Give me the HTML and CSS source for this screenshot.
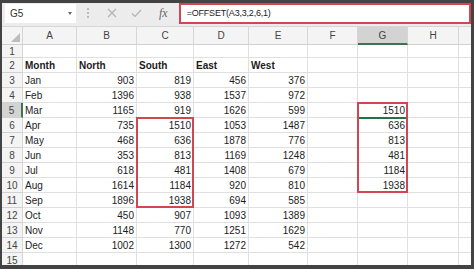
FILE: index.html
```html
<!DOCTYPE html>
<html lang="en">
<head>
  <meta charset="UTF-8" />
  <meta name="viewport" content="width=device-width, initial-scale=1.0"/>
  <title>OFFSET example - Sheet1</title>
  <link rel="stylesheet" href="styles.css">
</head>
<body>
  <div class="window">
    <div class="formula-bar">
      <div class="name-box">
        <span>G5</span>
        <span class="caret"></span>
      </div>
      <div class="grip"><i></i><i></i><i></i></div>
      <svg class="bar-icon cancel" width="10" height="10" viewBox="0 0 10 10" aria-label="Cancel">
        <path d="M1 1 L9 9 M9 1 L1 9" />
      </svg>
      <svg class="bar-icon enter" width="11" height="9" viewBox="0 0 11 9" aria-label="Enter">
        <path d="M1 4.5 L4 7.5 L10 1" />
      </svg>
      <span class="fx">fx</span>
      <div class="formula">=OFFSET(A3,3,2,6,1)</div>
    </div>

    <div class="sheet" id="sheet">
      <!-- cells are added by app.js -->
      <div class="selected"></div>
      <div class="outline source"></div>
      <div class="outline result"></div>
    </div>
  </div>

  <script src="app.js"></script>
</body>
</html>
```

FILE: styles.css
```css
/* Basic reset */
* {
  margin: 0;
  padding: 0;
  box-sizing: border-box;
}

body {
  width: 474px;
  height: 269px;
  overflow: hidden;
  padding: 3px 3px 0 2px;
  background-color: #434343;
  font-family: "Liberation Sans", Arial, sans-serif;
  color: #1c1c1c;
}

.window {
  height: 262px;
  background-color: #fff;
  overflow: hidden;
}

/* Formula bar */
.formula-bar {
  height: 24px;
  display: flex;
  align-items: center;
  padding-bottom: 3px;
  background-color: #ececec;
  border-bottom: 1px solid #d6d6d6;
}

.name-box {
  width: 71px;
  height: 19px;
  margin-left: 3px;
  display: flex;
  align-items: center;
  justify-content: space-between;
  padding: 0 4px 0 5px;
  background-color: #fff;
  font-size: 10px;
  color: #333;
}

.caret {
  width: 0;
  height: 0;
  border-left: 2.5px solid transparent;
  border-right: 2.5px solid transparent;
  border-top: 3px solid #666;
}

.grip {
  display: flex;
  flex-direction: column;
  gap: 2px;
  margin-left: 11px;
}

.grip i {
  width: 2px;
  height: 2px;
  background-color: #bbb;
}

.bar-icon {
  fill: none;
  stroke: #b3b3b3;
  stroke-width: 1.2;
}

.cancel {
  margin-left: 18px;
}

.enter {
  margin-left: 14px;
}

.fx {
  margin-left: 17px;
  font-family: "Liberation Serif", "Times New Roman", serif;
  font-style: italic;
  font-size: 12px;
  color: #666;
}

.formula {
  flex: 1;
  height: 21px;
  margin-left: 11px;
  padding-left: 6px;
  display: flex;
  align-items: center;
  background-color: #fff;
  border: 2px solid #d4464f;
  font-size: 9px;
  letter-spacing: -0.2px;
  color: #222;
}

/* Grid */
.sheet {
  display: grid;
  grid-template-columns: 21px 54px 60px 57px 55px 59px 50px 50px 51px 51px;
  grid-template-rows: 18px 13px repeat(14, 15px);
  font-size: 10px;
}

.corner,
.col-head,
.row-head {
  background-color: #f4f4f4;
  color: #444;
  border-right: 1px solid #d6d6d6;
  border-bottom: 1px solid #d0d0d0;
  display: flex;
  align-items: center;
  justify-content: center;
}

.corner {
  align-items: flex-end;
  justify-content: flex-end;
  padding: 0 2px 2px 0;
}

.corner::after {
  content: "";
  width: 0;
  height: 0;
  border-left: 9px solid transparent;
  border-bottom: 9px solid #bdbdbd;
}

.col-head.active {
  background-color: #d3d3d3;
  border-bottom: 2px solid #3d7452;
}

.row-head.active {
  background-color: #d3d3d3;
  border-right: 2px solid #3d7452;
}

.cell {
  border-right: 1px solid #e0e0e0;
  border-bottom: 1px solid #e0e0e0;
  display: flex;
  align-items: flex-end;
  padding: 0 2px;
  line-height: 12px;
  white-space: nowrap;
  overflow: hidden;
}

.cell.num {
  justify-content: flex-end;
}

.cell.bold {
  font-weight: bold;
}

/* Selection and highlighted ranges */
.selected {
  grid-column: 8;
  grid-row: 6;
  border-bottom: 2px solid #217346;
  margin-bottom: -1px;
  z-index: 1;
}

.outline {
  border: 2px solid #d4464f;
  margin: -1px 0 0 -1px;
  z-index: 2;
}

.source {
  grid-column: 4;
  grid-row: 7 / 13;
}

.result {
  grid-column: 8;
  grid-row: 6 / 12;
}
```

FILE: app.js
```js
// Sheet values, one array per row (index 0 = column A)
const rows = [
  [],
  ['Month', 'North', 'South', 'East', 'West'],
  ['Jan', 903, 819, 456, 376],
  ['Feb', 1396, 938, 1537, 972],
  ['Mar', 1165, 919, 1626, 599, '', 1510],
  ['Apr', 735, 1510, 1053, 1487, '', 636],
  ['May', 468, 636, 1878, 776, '', 813],
  ['Jun', 353, 813, 1169, 1248, '', 481],
  ['Jul', 618, 481, 1408, 679, '', 1184],
  ['Aug', 1614, 1184, 920, 810, '', 1938],
  ['Sep', 1896, 1938, 694, 585],
  ['Oct', 450, 907, 1093, 1389],
  ['Nov', 1148, 770, 1251, 1629],
  ['Dec', 1002, 1300, 1272, 542],
  []
];
// last column is only a sliver at the window edge, so no label
const columns = ['A', 'B', 'C', 'D', 'E', 'F', 'G', 'H', ''];
const sheet = document.getElementById('sheet');

function addCell(row, col, text, className) {
  const cell = document.createElement('div');
  cell.className = className;
  cell.textContent = text;
  cell.style.gridRow = row;
  cell.style.gridColumn = col;
  sheet.appendChild(cell);
}

// Header row
addCell(1, 1, '', 'corner');
columns.forEach((name, i) => {
  addCell(1, i + 2, name, name === 'G' ? 'col-head active' : 'col-head');
});

// Body rows
rows.forEach((values, r) => {
  const rowNumber = r + 1;
  addCell(r + 2, 1, rowNumber, rowNumber === 5 ? 'row-head active' : 'row-head');

  columns.forEach((name, c) => {
    const value = values[c] === undefined ? '' : values[c];
    let className = 'cell';
    if (typeof value === 'number') className += ' num';
    if (rowNumber === 2) className += ' bold';
    addCell(r + 2, c + 2, value, className);
  });
});
```
